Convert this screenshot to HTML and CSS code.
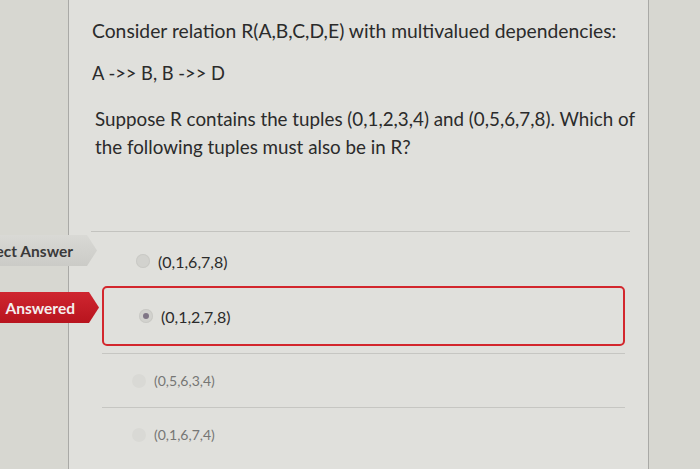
FILE: index.html
```html
<!DOCTYPE html>
<html lang="en">
<head>
<meta charset="utf-8">
<title>Question</title>
<link rel="stylesheet" href="styles.css">
</head>
<body>
<div class="page">
  <div class="card">
    <div class="question">
      <p class="q-line first">Consider relation R(A,B,C,D,E) with multivalued dependencies:</p>
      <p class="q-line second">A -&gt;&gt; B, B -&gt;&gt; D</p>
      <p class="q-line third">Suppose R contains the tuples (0,1,2,3,4) and (0,5,6,7,8). Which of the following tuples must also be in R?</p>
    </div>
    <div class="answers">
      <div class="answer correct">
        <span class="tag tag-correct">Correct Answer</span>
        <span class="radio"></span>
        <span class="label">(0,1,6,7,8)</span>
      </div>
      <div class="answer selected">
        <span class="tag tag-answered">Answered</span>
        <span class="radio checked"></span>
        <span class="label">(0,1,2,7,8)</span>
      </div>
      <div class="answer faded">
        <span class="radio"></span>
        <span class="label">(0,5,6,3,4)</span>
      </div>
      <div class="answer faded">
        <span class="radio"></span>
        <span class="label">(0,1,6,7,4)</span>
      </div>
    </div>
  </div>
</div>
</body>
</html>
```
FILE: styles.css
```css
html, body {
  margin: 0;
  padding: 0;
}
body {
  width: 700px;
  height: 469px;
  overflow: hidden;
  background: #d7d7d1;
  font-family: "Lato", "Open Sans", sans-serif;
  color: #2b2b2b;
}
.page {
  height: 469px;
  display: flex;
}
.card {
  margin-left: 68px;
  width: 581px;
  height: 469px;
  background: #e0e0dc;
  border-left: 1px solid #a9a9a6;
  border-right: 1px solid #a9a9a6;
  box-sizing: border-box;
}
.question {
  padding: 17px 0 0 23px;
  margin-left: 22px;
  margin-right: 18px;
  border-bottom: 1px solid #c3c3bf;
  height: 232px;
  box-sizing: border-box;
}
.q-line {
  margin: 0 0 0 -22px;
  font-size: 19px;
  line-height: 28px;
}
.q-line.first {
  font-size: 19.3px;
}
.q-line.second {
  margin-top: 14px;
  font-size: 18.3px;
}
.q-line.third {
  margin-top: 18px;
  padding-left: 3px;
  margin-right: -14px;
  font-size: 18.8px;
}
.answers {
  margin-left: 33px;
  margin-right: 23px;
  display: flex;
  flex-direction: column;
}
.answer {
  position: relative;
  display: flex;
  align-items: center;
  height: 54px;
  padding-left: 34px;
  border-top: 1px solid #c6c6c2;
  box-sizing: border-box;
}
.answer.correct {
  border-top: none;
  height: 54px;
  padding-top: 4px;
}
.answer.selected {
  height: 60px;
  border: 2px solid #d3272d;
  border-radius: 5px;
  padding-left: 35px;
  margin-bottom: 7px;
}
.radio {
  width: 14px;
  height: 14px;
  border-radius: 50%;
  background: #d2d2ce;
  box-shadow: inset 0 0 0 1px #cacac6;
  display: flex;
  align-items: center;
  justify-content: center;
  flex: none;
}
.radio.checked::after {
  content: "";
  width: 6px;
  height: 6px;
  border-radius: 50%;
  background: #7f7585;
}
.label {
  margin-left: 8px;
  font-size: 16px;
}
.faded {
  padding-left: 30px;
}
.faded .label {
  font-size: 14px;
  color: #767674;
}
.faded .radio {
  background: #d9d9d5;
  box-shadow: none;
}
.tag {
  position: absolute;
  right: calc(100% + 5px);
  width: 140px;
  height: 31px;
  box-sizing: border-box;
  padding-right: 24px;
  display: flex;
  align-items: center;
  justify-content: flex-end;
  font-size: 15.5px;
  font-weight: bold;
  clip-path: polygon(0 0, calc(100% - 10px) 0, 100% 50%, calc(100% - 10px) 100%, 0 100%);
}
.tag-correct {
  top: 3px;
  color: #3a3a3a;
  background: linear-gradient(#d9d9d5, #cbcbc7);
}
.tag-answered {
  top: 4px;
  color: #f4eeee;
  background: linear-gradient(#cf2630, #b8141e);
}
```
